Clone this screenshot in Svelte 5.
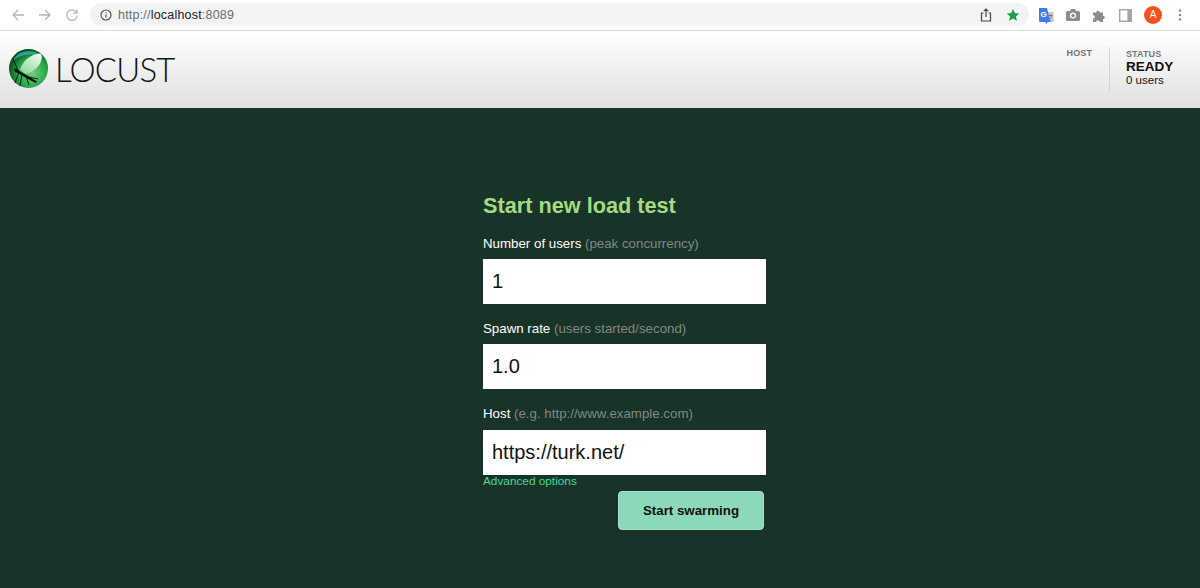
<script>
	let users = '1';
	let rate = '1.0';
	let host = 'https://turk.net/';
</script>

<div class="page">
	<div class="chrome">
		<div class="nav">
			<svg width="14" height="14" viewBox="0 0 14 14"><path d="M13 7H2M7 2 2 7l5 5" /></svg>
			<svg width="14" height="14" viewBox="0 0 14 14"><path d="M1 7h11M7 2l5 5-5 5" /></svg>
			<svg width="14" height="14" viewBox="0 0 14 14"><path d="M11.6 4.5A5.3 5.3 0 1 0 12.3 7.5M12 1.5v3.6H8.4" /></svg>
		</div>
		<div class="urlbar">
			<svg class="info" width="12" height="12" viewBox="0 0 12 12">
				<circle cx="6" cy="6" r="5" />
				<path d="M6 5.4v3.2M6 3.2v1" />
			</svg>
			<span class="url">http://<b>localhost</b>:8089</span>
			<div class="spacer"></div>
			<svg class="share" width="12" height="14" viewBox="0 0 12 14">
				<path d="M3.5 5H1.5v8h9V5H8.5M6 9V1M3.8 3.2 6 1l2.200 2.200" />
			</svg>
			<svg class="star" width="14" height="14" viewBox="0 0 14 14">
				<path d="M7 1l1.800 4.100 4.400.4-3.300 2.900 1 4.400L7 10.500l-3.900 2.300 1-4.400L.8 5.500l4.400-.4z" />
			</svg>
		</div>
		<div class="tools">
			<svg width="16" height="17" viewBox="0 0 16 17">
				<path d="M7 5h8.500v10H9z" fill="#c4c8cc" />
				<path d="M1 1h8l3.500 14H9.500l-1 2-1.500-2H2a1 1 0 0 1-1-1z" fill="#3f7fe8" />
				<text x="2.600" y="10.200" class="g">G</text>
				<path d="M10.500 8.500h4M12.500 7.500v1M11 12.500c1.500-1 2.500-2.500 3-4" fill="none" stroke="#777" stroke-width="1" />
			</svg>
			<svg class="camera" width="14" height="12" viewBox="0 0 14 12">
				<path fill-rule="evenodd" d="M1.500 2H4l1-2h4l1 2h2.500A1.500 1.500 0 0 1 14 3.500v7a1.500 1.500 0 0 1-1.500 1.500h-11A1.500 1.500 0 0 1 0 10.500v-7A1.500 1.500 0 0 1 1.500 2zM7 3.500a3 3 0 1 0 0 6 3 3 0 0 0 0-6z" fill="#8a8d90" />
				<circle cx="7" cy="6.500" r="1.700" fill="#8a8d90" />
			</svg>
			<svg width="13" height="13" viewBox="0 0 13 13">
				<path d="M0 3.500h3.200a1.800 1.800 0 1 1 3.600 0H10v3.200a1.800 1.800 0 1 1 0 3.600V13H6.800a1.800 1.800 0 1 0-3.600 0H0V9.800a1.800 1.800 0 1 0 0-3.600z" fill="#8a8d90" />
			</svg>
			<svg width="13" height="13" viewBox="0 0 13 13">
				<rect width="13" height="13" fill="#a4a6a9" />
				<rect x="1.400" y="1.400" width="7" height="10.200" fill="#fff" />
			</svg>
			<div class="avatar">A</div>
			<svg width="4" height="12" viewBox="0 0 4 12">
				<circle cx="2" cy="1.500" r="1.200" fill="#85888b" />
				<circle cx="2" cy="6" r="1.200" fill="#85888b" />
				<circle cx="2" cy="10.500" r="1.200" fill="#85888b" />
			</svg>
		</div>
	</div>

	<header class="top">
		<div class="brand">
			<svg class="logo" width="39" height="39" viewBox="0 0 39 39">
				<defs>
					<radialGradient id="ball" cx="0.6" cy="0.62" r="0.62">
						<stop offset="0" stop-color="#6fd07a" />
						<stop offset="0.6" stop-color="#27a648" />
						<stop offset="1" stop-color="#07501f" />
					</radialGradient>
					<linearGradient id="wing" x1="0.2" y1="1" x2="0.8" y2="0">
						<stop offset="0" stop-color="#8ed79a" />
						<stop offset="1" stop-color="#eef9ec" />
					</linearGradient>
				</defs>
				<circle cx="19.500" cy="19.500" r="19.500" fill="url(#ball)" />
				<path d="M3.500 12A18.500 18.500 0 0 1 35 10 26 26 0 0 0 3.500 12z" fill="#2aa39a" />
				<path d="M11 21C13 13 22 4 32 4.500 35 12 28 22 17 25z" fill="url(#wing)" />
				<path d="M5 19.500 8 20l3 2.500 9 5 8 5-1 1.500-9-4.500-8-5-4-1.500z" fill="#0a120b" />
				<path d="M10 23 6 34M13 25l-2 12M17 27l3 9M9 21 4 10M20 28l9 2" stroke="#0a120b" stroke-width="0.900" fill="none" />
			</svg>
			<span class="wordmark">LOCUST</span>
		</div>
		<div class="stats">
			<div class="stat host">
				<div class="stat-label">HOST</div>
			</div>
			<div class="stat status">
				<div class="stat-label">STATUS</div>
				<div class="state">READY</div>
				<div class="count">0 users</div>
			</div>
		</div>
	</header>

	<main class="main">
		<form class="form" on:submit|preventDefault>
			<h2>Start new load test</h2>
			<label for="users">Number of users <small>(peak concurrency)</small></label>
			<input id="users" type="text" bind:value={users} />
			<label for="rate">Spawn rate <small>(users started/second)</small></label>
			<input id="rate" type="text" bind:value={rate} />
			<label class="host-label" for="host">Host <small>(e.g. http://www.example.com)</small></label>
			<input id="host" type="text" bind:value={host} />
			<a class="advanced" href="#advanced">Advanced options</a>
			<button type="submit">Start swarming</button>
		</form>
	</main>
</div>

<style>
	:global(body) {
		margin: 0;
		background: #1a3329;
		font-family: 'Liberation Sans', Arial, sans-serif;
	}

	.page {
		height: 588px;
		display: flex;
		flex-direction: column;
		overflow: hidden;
	}

	.chrome {
		flex: 0 0 30px;
		display: flex;
		align-items: center;
		background: #fff;
		border-bottom: 1px solid #d8d8da;
	}

	.nav {
		display: flex;
		gap: 13px;
		padding-left: 11px;
		width: 79px;
		box-sizing: border-box;
	}

	.nav svg path {
		fill: none;
		stroke: #b4b6b9;
		stroke-width: 1.300;
	}

	.urlbar {
		width: 939px;
		height: 23px;
		margin-left: 11px;
		margin-top: -1px;
		display: flex;
		align-items: center;
		background: #f1f3f4;
		border-radius: 12px;
		box-sizing: border-box;
		padding: 0 9px 0 10px;
	}

	.info circle,
	.info path {
		fill: none;
		stroke: #55585b;
		stroke-width: 1.200;
	}

	.url {
		margin-left: 6px;
		font-size: 12.500px;
		color: #6a6d70;
		letter-spacing: 0.200px;
	}

	.url b {
		font-weight: normal;
		color: #202124;
	}

	.spacer {
		flex: 1;
	}

	.share path {
		fill: none;
		stroke: #444;
		stroke-width: 1.200;
	}

	.star {
		margin-left: 14px;
	}

	.star path {
		fill: #1e9e49;
	}

	.tools {
		display: flex;
		align-items: center;
		margin-left: 9px;
		gap: 13px;
	}

	.g {
		font-size: 8px;
		font-weight: bold;
		fill: #fff;
	}

	.camera {
		margin-left: -1px;
	}

	.avatar {
		width: 18px;
		height: 18px;
		margin-left: -1px;
		margin-right: 3px;
		border-radius: 50%;
		background: #f4511e;
		color: #fff;
		font-size: 10px;
		line-height: 18px;
		text-align: center;
	}

	.top {
		flex: 0 0 77px;
		display: flex;
		justify-content: space-between;
		background: linear-gradient(#fff, #e0e0e0);
	}

	.brand {
		display: flex;
		align-items: center;
		padding-left: 9px;
		height: 75px;
	}

	.wordmark {
		margin-left: 7px;
		font-family: Lato, sans-serif;
		font-weight: 300;
		font-size: 33px;
		letter-spacing: -0.800px;
		color: #111;
	}

	.stats {
		display: flex;
		padding-top: 16px;
		height: 45px;
	}

	.stat {
		height: 45px;
	}

	.host {
		padding-right: 17px;
		border-right: 1px solid #d3d3d3;
	}

	.status {
		padding-left: 16px;
		width: 74px;
	}

	.stat-label {
		font-size: 9px;
		font-weight: bold;
		letter-spacing: 0.100px;
		line-height: 12px;
		color: #757575;
	}

	.status .stat-label {
		margin-top: 1px;
	}

	.state {
		font-size: 13.500px;
		font-weight: bold;
		line-height: 13px;
		color: #111;
	}

	.count {
		font-size: 11.500px;
		line-height: 15px;
		color: #111;
	}

	.main {
		flex: 1;
		background: #1a3329;
		display: flex;
		justify-content: center;
	}

	.form {
		width: 283px;
		margin-left: 49px;
		padding-top: 85px;
		display: flex;
		flex-direction: column;
	}

	h2 {
		margin: 0 0 18px;
		font-size: 21.700px;
		line-height: 25px;
		font-weight: bold;
		color: #a3dc80;
	}

	label {
		font-size: 13.300px;
		line-height: 16px;
		color: #fff;
		margin-bottom: 7px;
	}

	.host-label {
		margin-bottom: 8px;
	}

	label small {
		font-size: 13.300px;
		color: #7d8a84;
	}

	input {
		height: 45px;
		box-sizing: border-box;
		margin-bottom: 17px;
		padding: 0 9px;
		border: 0;
		border-radius: 0;
		background: #fff;
		font-family: inherit;
		font-size: 20px;
		color: #111;
		outline: none;
	}

	#host {
		margin-bottom: 0;
	}

	.advanced {
		font-size: 11.800px;
		line-height: 13px;
		color: #3ddc97;
		text-decoration: none;
	}

	button {
		align-self: flex-end;
		width: 146px;
		height: 39px;
		margin-top: 3px;
		margin-right: 2px;
		border: 1px solid #a8e0c4;
		border-radius: 4px;
		background: #8bd9b8;
		font-family: inherit;
		font-size: 13.300px;
		font-weight: bold;
		color: #111;
	}
</style>
